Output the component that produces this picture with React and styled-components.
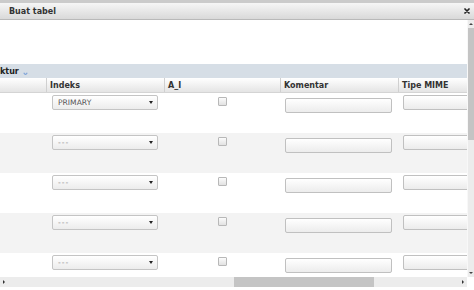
import React from "react";
import styled, { createGlobalStyle } from "styled-components";

const GlobalStyle = createGlobalStyle`
    html, body {
        margin: 0;
        padding: 0;
        background: #ffffff;
    }
    body {
        font-family: "DejaVu Sans", Verdana, sans-serif;
    }
`;

const Dialog = styled.div`
    width: 474px;
    height: 290px;
    display: flex;
    flex-direction: column;
    background: #fff;
    overflow: hidden;
`;

const TopStrip = styled.div`
    height: 3px;
    background: #cbcbcb;
`;

const TitleBar = styled.div`
    height: 16px;
    display: flex;
    align-items: center;
    justify-content: space-between;
    padding: 0 4px 0 9px;
    background: linear-gradient(#f6f6f6, #d9d9d9);
    border-bottom: 1px solid #b9b9b9;
`;

const Title = styled.span`
    font-size: 8px;
    font-weight: bold;
    color: #333;
`;

const Body = styled.div`
    flex: 1;
    display: flex;
    min-height: 0;
`;

const Main = styled.div`
    flex: 1;
    display: flex;
    flex-direction: column;
    min-width: 0;
`;

const Viewport = styled.div`
    flex: 1;
    overflow: hidden;
    display: flex;
    flex-direction: column;
`;

const Spacer = styled.div`
    height: 44px;
    flex-shrink: 0;
`;

const Band = styled.div`
    height: 14px;
    flex-shrink: 0;
    display: flex;
    align-items: center;
    gap: 4px;
    background: #d6dee6;
    font-size: 8px;
    font-weight: bold;
    color: #222;
`;

const Grid = styled.div`
    display: grid;
    grid-template-columns: 46px 118px 116px 118px 1fr;
    flex-shrink: 0;
`;

const HeadRow = styled(Grid)`
    height: 15px;
    background: linear-gradient(#ffffff, #e4e4e4);
    border-bottom: 1px solid #d4d4d4;
    box-sizing: border-box;
`;

const HeadCell = styled.div`
    display: flex;
    align-items: center;
    padding-left: 3px;
    font-size: 8px;
    font-weight: bold;
    color: #333;
    white-space: nowrap;
    border-left: ${p => (p.$first ? "none" : "1px solid #d0d0d0")};
    box-sizing: border-box;
`;

const Row = styled(Grid)`
    height: 40px;
    background: ${p => (p.$alt ? "#f3f3f3" : "#ffffff")};
`;

const Cell = styled.div`
    padding-top: ${p => p.$top}px;
    padding-left: ${p => p.$left || 0}px;
    display: flex;
    justify-content: ${p => (p.$center ? "center" : "flex-start")};
    align-items: flex-start;
    overflow: hidden;
`;

const Select = styled.div`
    width: 106px;
    height: 15px;
    box-sizing: border-box;
    display: flex;
    align-items: center;
    justify-content: space-between;
    padding: 0 4px 0 5px;
    border: 1px solid #c4c4c4;
    border-radius: 2px;
    background: linear-gradient(#ffffff, #ececec);
    font-size: 7.6px;
    color: ${p => (p.$muted ? "#888" : "#555")};
    letter-spacing: ${p => (p.$muted ? "1px" : "0")};
`;

const Caret = styled.span`
    width: 0;
    height: 0;
    border-left: 2px solid transparent;
    border-right: 2px solid transparent;
    border-top: 3px solid #222;
`;

const Checkbox = styled.div`
    width: 7px;
    height: 7px;
    border: 1px solid #b8b8b8;
    border-radius: 1px;
    background: linear-gradient(#fbfbfb, #e2e2e2);
`;

const Input = styled.div`
    width: ${p => p.$w}px;
    flex-shrink: 0;
    height: 15px;
    box-sizing: border-box;
    border: 1px solid #c0c0c0;
    border-radius: 2px;
    background: linear-gradient(#ffffff, #ececec);
`;

const HScroll = styled.div`
    height: 10px;
    flex-shrink: 0;
    display: flex;
    align-items: center;
    background: #ececec;
    padding: 0 3px;
`;

const HThumb = styled.div`
    height: 10px;
    width: 140px;
    margin-left: 229px;
    margin-right: auto;
    background: #c4c4c4;
`;

const ArrowRight = styled.span`
    width: 0;
    height: 0;
    border-top: 2px solid transparent;
    border-bottom: 2px solid transparent;
    border-left: 2px solid #333;
`;

const VScroll = styled.div`
    width: 6px;
    height: 257px;
    display: flex;
    flex-direction: column;
    align-items: center;
    background: #ececec;
    border-left: 1px solid #f8f8f8;
`;

const ArrowUp = styled.span`
    margin-top: 3px;
    width: 0;
    height: 0;
    border-left: 2px solid transparent;
    border-right: 2px solid transparent;
    border-bottom: 2px solid #444;
`;

const VThumb = styled.div`
    margin-top: 3px;
    width: 6px;
    height: 112px;
    background: #c4c4c4;
`;

const ArrowDown = styled.span`
    margin-top: auto;
    margin-bottom: 3px;
    width: 0;
    height: 0;
    border-left: 2px solid transparent;
    border-right: 2px solid transparent;
    border-top: 2px solid #444;
`;

const BottomPad = styled.div`
    height: 3px;
    background: #fff;
`;

const CloseIcon = () => (
    <svg width="6" height="6" viewBox="0 0 6 6">
        <path d="M1 1 L5 5 M5 1 L1 5" stroke="#222" strokeWidth="1.7" strokeLinecap="round" />
    </svg>
);

const HelpIcon = () => (
    <svg width="5" height="4" viewBox="0 0 5 4" style={{marginTop: 5}}>
        <path d="M0.8 0.8 Q2.5 4 4.2 0.8" stroke="#7ea3d8" strokeWidth="1.2" fill="none" />
    </svg>
);

const rows = [
    {index: "PRIMARY"},
    {index: "---"},
    {index: "---"},
    {index: "---"},
    {index: "---"},
];

export default function App() {
    return <>
        <GlobalStyle/>
        <Dialog>
            <TopStrip/>
            <TitleBar>
                <Title>Buat tabel</Title>
                <CloseIcon/>
            </TitleBar>
            <Body>
                <Main>
                    <Viewport>
                        <Spacer/>
                        <Band>
                            <span>ktur</span>
                            <HelpIcon/>
                        </Band>
                        <HeadRow>
                            <HeadCell $first/>
                            <HeadCell>Indeks</HeadCell>
                            <HeadCell>A_I</HeadCell>
                            <HeadCell>Komentar</HeadCell>
                            <HeadCell>Tipe MIME</HeadCell>
                        </HeadRow>
                        {rows.map((r, i) => (
                            <Row key={i} $alt={i % 2 === 1}>
                                <Cell/>
                                <Cell $top={2} $left={6}>
                                    <Select $muted={r.index === "---"}>
                                        <span>{r.index}</span>
                                        <Caret/>
                                    </Select>
                                </Cell>
                                <Cell $top={4} $center>
                                    <Checkbox/>
                                </Cell>
                                <Cell $top={5} $left={5}>
                                    <Input $w={107}/>
                                </Cell>
                                <Cell $top={2} $left={5}>
                                    <Input $w={80}/>
                                </Cell>
                            </Row>
                        ))}
                    </Viewport>
                    <HScroll>
                        <ArrowRight/>
                        <HThumb/>
                        <ArrowRight/>
                    </HScroll>
                </Main>
                <VScroll>
                    <ArrowUp/>
                    <VThumb/>
                    <ArrowDown/>
                </VScroll>
            </Body>
            <BottomPad/>
        </Dialog>
    </>;
}
